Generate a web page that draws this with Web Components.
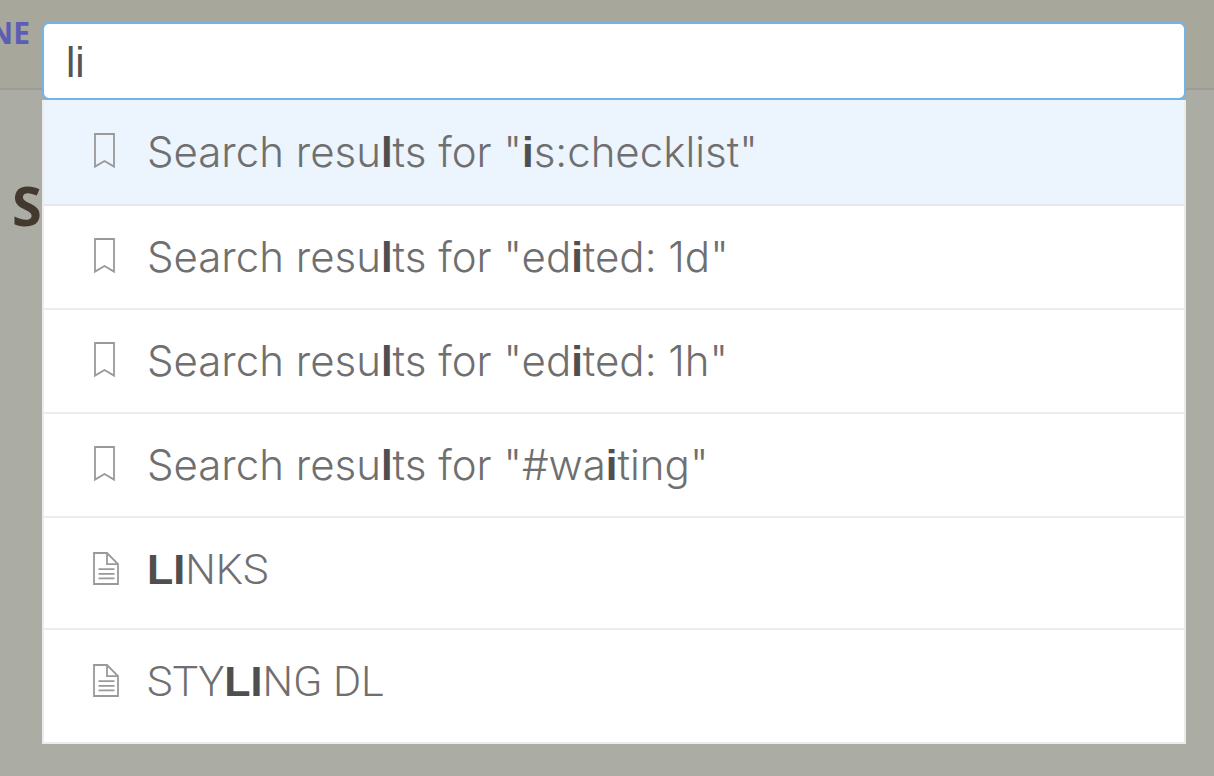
<!DOCTYPE html>
<html lang="en">
<head>
<meta charset="utf-8">
<title>Search</title>
<style>
  html, body { margin: 0; min-height: 100%; }
  body { background: #abada5; font-family: Inter, sans-serif; color: #6f6f6f; }
</style>
</head>
<body>
<page-backdrop>
  <span slot="nav">NE</span>
  <span slot="title">S</span>
</page-backdrop>
<search-panel query="li">
  <result-row kind="saved" active>Search resu<b>l</b>ts for "<b>i</b>s:checklist"</result-row>
  <result-row kind="saved">Search resu<b>l</b>ts for "ed<b>i</b>ted: 1d"</result-row>
  <result-row kind="saved">Search resu<b>l</b>ts for "ed<b>i</b>ted: 1h"</result-row>
  <result-row kind="saved">Search resu<b>l</b>ts for "#wa<b>i</b>ting"</result-row>
  <result-row kind="note"><b>LI</b>NKS</result-row>
  <result-row kind="note">STY<b>LI</b>NG DL</result-row>
</search-panel>

<script>
const icons = {
  saved: `<svg width="28" height="36" viewBox="0 0 28 36" fill="none" stroke="currentColor" stroke-width="1.8"><path d="M4 1h19v32.6l-9.5-5.6-9.5 5.6z"/></svg>`,
  note: `<svg width="28" height="36" viewBox="0 0 28 36" fill="none" stroke="currentColor" stroke-width="1.8"><path d="M3 3h13l11 11.2v19.8H3zM16 3v11.2h11M7.5 19.2h16M7.5 23.8h16M7.5 28.4h16"/></svg>`
};

class PageBackdrop extends HTMLElement {
  constructor() {
    super();
    this.attachShadow({ mode: 'open' }).innerHTML = `
      <style>
        :host { display: block; font-family: "Open Sans", sans-serif; font-weight: 700; }
        header { box-sizing: border-box; height: 90px; padding-top: 12px; background: #a7a79b; border-bottom: 2px solid #9c9d9b; }
        nav { display: flex; justify-content: flex-end; width: 30px; font-size: 30px; line-height: 42px; color: #5d5db5; }
        h1 { margin: 0; padding: 78px 0 0 12px; font-size: 54px; line-height: 74px; color: #43392f; }
      </style>
      <header><nav><slot name="nav"></slot></nav></header>
      <h1><slot name="title"></slot></h1>`;
  }
}
customElements.define('page-backdrop', PageBackdrop);

class SearchPanel extends HTMLElement {
  constructor() {
    super();
    this.attachShadow({ mode: 'open' }).innerHTML = `
      <style>
        :host { display: block; position: absolute; top: 22px; left: 42px; right: 28px; }
        input { display: block; box-sizing: border-box; width: 100%; height: 78px; margin: 0; padding: 4px 22px 0;
          border: 2px solid #74b3e8; border-radius: 7px; outline: none; background: #fff;
          font: 400 42px/48px "Liberation Sans", sans-serif; color: #555; }
        .list { border: 2px solid #ececec; border-top: 0; background: #fff; }
      </style>
      <input type="text" aria-label="Search">
      <div class="list" role="listbox" aria-label="Results"><slot></slot></div>`;
    this.shadowRoot.querySelector('input').value = this.getAttribute('query') || '';
  }
}
customElements.define('search-panel', SearchPanel);

class ResultRow extends HTMLElement {
  constructor() {
    super();
    const kind = this.getAttribute('kind');
    this.setAttribute('role', 'option');
    this.attachShadow({ mode: 'open' }).innerHTML = `
      <style>
        :host { display: flex; align-items: center; gap: 28px; box-sizing: border-box; height: 104px; padding: 0 20px 0 47px;
          border-bottom: 2px solid #ececec; font-size: 42px; font-weight: 300; line-height: 56px; }
        :host([active]) { height: 106px; background: #ecf4fd; border-color: #e3e8ee; }
        :host([kind="note"]) { height: 112px; padding-bottom: 8px; font-family: Roboto, sans-serif; font-size: 43px; }
        :host(:last-of-type) { border-bottom-color: #fff; }
        svg { display: block; flex: none; margin-bottom: 2px; color: #999; }
        ::slotted(b) { font-weight: 700; font-family: "Liberation Sans", sans-serif; color: #4f4f4f; }
      </style>
      ${icons[kind]}<span><slot></slot></span>`;
  }
}
customElements.define('result-row', ResultRow);
</script>
</body>
</html>
